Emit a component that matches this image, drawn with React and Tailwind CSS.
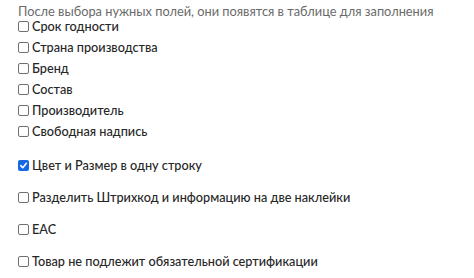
import React from "react";

const topFields = [
  { label: "Срок годности", checked: false },
  { label: "Страна производства", checked: false },
  { label: "Бренд", checked: false },
  { label: "Состав", checked: false },
  { label: "Производитель", checked: false },
  { label: "Свободная надпись", checked: false },
];

const options = [
  { label: "Цвет и Размер в одну строку", checked: true },
  { label: "Разделить Штрихкод и информацию на две наклейки", checked: false },
  { label: "EAC", checked: false },
  { label: "Товар не подлежит обязательной сертификации", checked: false },
];

function Box({ checked }) {
  if (checked) {
    return (
      <span className="flex h-[11px] w-[11px] shrink-0 items-center justify-center rounded-[2px] bg-[#1668e3]">
        <svg viewBox="0 0 10 10" className="h-[9px] w-[9px]">
          <path d="M2 5.2 L4.2 7.4 L8.2 2.6" fill="none" stroke="white" strokeWidth="1.8" strokeLinecap="round" strokeLinejoin="round" />
        </svg>
      </span>
    );
  }
  return <span className="h-[11px] w-[11px] shrink-0 rounded-[2px] border border-[#707070] bg-white" />;
}

function Row({ label, checked }) {
  return (
    <label className="flex h-[21px] items-center gap-[3px]">
      <Box checked={checked} />
      <span>{label}</span>
    </label>
  );
}

export default function App() {
  return (
    <div className="h-[278px] w-[474px] overflow-hidden bg-white pl-[18px] font-['Lato',sans-serif] text-[12.7px] font-medium text-[#262626]">
      <p className="h-[16px] pt-[2px] text-[12.8px] font-normal leading-[18px] text-[#6a6a6a]">
        После выбора нужных полей, они появятся в таблице для заполнения
      </p>
      <div className="flex flex-col">
        {topFields.map((f) => (
          <Row key={f.label} {...f} />
        ))}
      </div>
      <div className="flex flex-col gap-[11px] pt-[13px]">
        {options.map((f) => (
          <Row key={f.label} {...f} />
        ))}
      </div>
    </div>
  );
}
